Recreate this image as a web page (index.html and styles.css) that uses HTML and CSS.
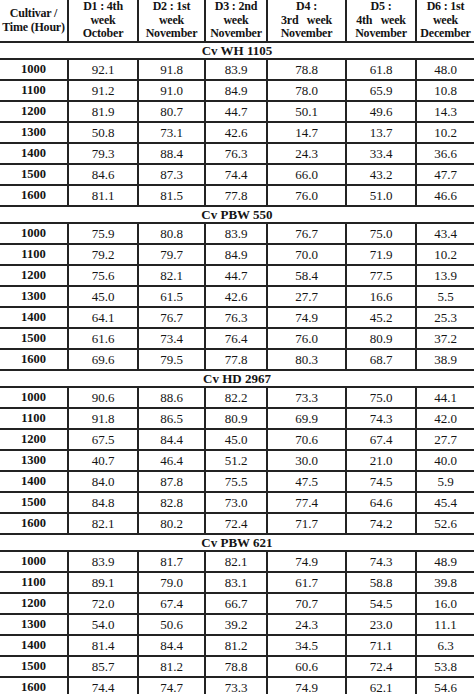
FILE: index.html
```html
<!DOCTYPE html>
<html>
<head>
<meta charset="utf-8">
<link rel="stylesheet" href="styles.css">
</head>
<body>
<table class="data">
<colgroup>
<col class="c0"><col class="c1"><col class="c2"><col class="c3"><col class="c4"><col class="c5"><col class="c6">
</colgroup>
<thead>
<tr class="head">
<th>Cultivar /<br>Time (Hour)</th>
<th>D1 : 4th<br>week<br>October</th>
<th>D2 : 1st<br>week<br>November</th>
<th>D3 : 2nd<br>week<br>November</th>
<th>D4 :<br>3rd&nbsp;&nbsp;&nbsp;week<br>November</th>
<th>D5 :<br>4th&nbsp;&nbsp;&nbsp;week<br>November</th>
<th>D6 : 1st<br>week<br>December</th>
</tr>
</thead>
<tbody>
<tr class="cv first"><td colspan="7">Cv WH 1105</td></tr>
<tr><th>1000</th><td>92.1</td><td>91.8</td><td>83.9</td><td>78.8</td><td>61.8</td><td>48.0</td></tr>
<tr><th>1100</th><td>91.2</td><td>91.0</td><td>84.9</td><td>78.0</td><td>65.9</td><td>10.8</td></tr>
<tr><th>1200</th><td>81.9</td><td>80.7</td><td>44.7</td><td>50.1</td><td>49.6</td><td>14.3</td></tr>
<tr><th>1300</th><td>50.8</td><td>73.1</td><td>42.6</td><td>14.7</td><td>13.7</td><td>10.2</td></tr>
<tr><th>1400</th><td>79.3</td><td>88.4</td><td>76.3</td><td>24.3</td><td>33.4</td><td>36.6</td></tr>
<tr><th>1500</th><td>84.6</td><td>87.3</td><td>74.4</td><td>66.0</td><td>43.2</td><td>47.7</td></tr>
<tr><th>1600</th><td>81.1</td><td>81.5</td><td>77.8</td><td>76.0</td><td>51.0</td><td>46.6</td></tr>
<tr class="cv"><td colspan="7">Cv PBW 550</td></tr>
<tr><th>1000</th><td>75.9</td><td>80.8</td><td>83.9</td><td>76.7</td><td>75.0</td><td>43.4</td></tr>
<tr><th>1100</th><td>79.2</td><td>79.7</td><td>84.9</td><td>70.0</td><td>71.9</td><td>10.2</td></tr>
<tr><th>1200</th><td>75.6</td><td>82.1</td><td>44.7</td><td>58.4</td><td>77.5</td><td>13.9</td></tr>
<tr><th>1300</th><td>45.0</td><td>61.5</td><td>42.6</td><td>27.7</td><td>16.6</td><td>5.5</td></tr>
<tr><th>1400</th><td>64.1</td><td>76.7</td><td>76.3</td><td>74.9</td><td>45.2</td><td>25.3</td></tr>
<tr><th>1500</th><td>61.6</td><td>73.4</td><td>76.4</td><td>76.0</td><td>80.9</td><td>37.2</td></tr>
<tr><th>1600</th><td>69.6</td><td>79.5</td><td>77.8</td><td>80.3</td><td>68.7</td><td>38.9</td></tr>
<tr class="cv"><td colspan="7">Cv HD 2967</td></tr>
<tr><th>1000</th><td>90.6</td><td>88.6</td><td>82.2</td><td>73.3</td><td>75.0</td><td>44.1</td></tr>
<tr><th>1100</th><td>91.8</td><td>86.5</td><td>80.9</td><td>69.9</td><td>74.3</td><td>42.0</td></tr>
<tr><th>1200</th><td>67.5</td><td>84.4</td><td>45.0</td><td>70.6</td><td>67.4</td><td>27.7</td></tr>
<tr><th>1300</th><td>40.7</td><td>46.4</td><td>51.2</td><td>30.0</td><td>21.0</td><td>40.0</td></tr>
<tr><th>1400</th><td>84.0</td><td>87.8</td><td>75.5</td><td>47.5</td><td>74.5</td><td>5.9</td></tr>
<tr><th>1500</th><td>84.8</td><td>82.8</td><td>73.0</td><td>77.4</td><td>64.6</td><td>45.4</td></tr>
<tr><th>1600</th><td>82.1</td><td>80.2</td><td>72.4</td><td>71.7</td><td>74.2</td><td>52.6</td></tr>
<tr class="cv"><td colspan="7">Cv PBW 621</td></tr>
<tr><th>1000</th><td>83.9</td><td>81.7</td><td>82.1</td><td>74.9</td><td>74.3</td><td>48.9</td></tr>
<tr><th>1100</th><td>89.1</td><td>79.0</td><td>83.1</td><td>61.7</td><td>58.8</td><td>39.8</td></tr>
<tr><th>1200</th><td>72.0</td><td>67.4</td><td>66.7</td><td>70.7</td><td>54.5</td><td>16.0</td></tr>
<tr><th>1300</th><td>54.0</td><td>50.6</td><td>39.2</td><td>24.3</td><td>23.0</td><td>11.1</td></tr>
<tr><th>1400</th><td>81.4</td><td>84.4</td><td>81.2</td><td>34.5</td><td>71.1</td><td>6.3</td></tr>
<tr><th>1500</th><td>85.7</td><td>81.2</td><td>78.8</td><td>60.6</td><td>72.4</td><td>53.8</td></tr>
<tr><th>1600</th><td>74.4</td><td>74.7</td><td>73.3</td><td>74.9</td><td>62.1</td><td>54.6</td></tr>
</tbody>
</table>
</body>
</html>
```
FILE: styles.css
```css
html, body {
  margin: 0;
  padding: 0;
  background: #ffffff;
}

body {
  width: 474px;
  height: 694px;
  overflow: hidden;
}

.data {
  width: 474px;
  table-layout: fixed;
  border-collapse: collapse;
  font-family: "Liberation Serif", "Times New Roman", serif;
  font-size: 13px;
  color: #141414;
}

.c0 { width: 68px; }
.c1 { width: 70px; }
.c2 { width: 67px; }
.c3 { width: 62px; }
.c4 { width: 79px; }
.c5 { width: 70px; }
.c6 { width: 58px; }

.data th,
.data td {
  padding: 0;
  text-align: center;
  vertical-align: middle;
  border: 2px solid #232323;
  line-height: 13px;
  white-space: nowrap;
  overflow: hidden;
}

.data tr > :first-child { border-left: none; }
.data tr > :last-child { border-right: none; }

.data th { font-weight: bold; }

.data tbody th { font-size: 12.5px; }

.head th {
  border-top: none;
  height: 41px;
  font-size: 12px;
  line-height: 13.5px;
  letter-spacing: -0.2px;
}

.data tbody tr { height: 21px; }

.cv td {
  font-weight: bold;
  height: 15px;
  line-height: 13px;
}

.data tbody tr.cv { height: 17px; }
.data tbody tr.cv.first { height: 15px; }
```
